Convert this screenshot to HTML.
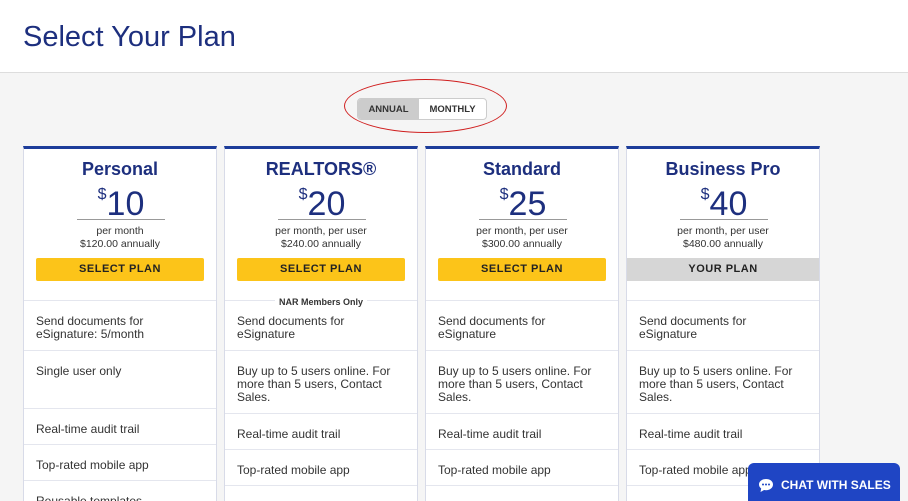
<!DOCTYPE html>
<html style="height:501px;overflow:hidden"><head><style>
*{box-sizing:border-box;margin:0;padding:0}
html,body{width:908px;height:501px;overflow:hidden}
body{background:#f5f5f5;font-family:"Liberation Sans",sans-serif;position:relative}
.hdr{position:absolute;left:0;top:0;width:908px;height:73px;background:#fff;border-bottom:1px solid #ddd}
.hdr h1{position:absolute;left:23px;top:21px;font-weight:normal;font-size:29px;color:#1d2f7e}
.tog{position:absolute;left:357px;top:98px;width:130px;height:22px;border:1px solid #ccc;border-radius:4px;background:#fff;font-size:9.5px;font-weight:bold;color:#333;display:flex;overflow:hidden}
.tog div{display:flex;align-items:center;justify-content:center}
.oval{position:absolute;left:344px;top:79px;width:163px;height:54px;border:1.5px solid #d02020;border-radius:50%}
.card{position:absolute;top:146px;width:194px;height:360px;background:#fff;border:1px solid #d8dbe8;border-top:3px solid #1d3d9a}
.t{position:absolute;top:10px;width:100%;text-align:center;font-size:18px;font-weight:bold;color:#1d2f7e}
.p{position:absolute;top:36px;left:53px;width:88px;height:35px;border-bottom:1px solid #999;text-align:center;color:#1d2f7e;font-size:34px;line-height:38px}
.p sup{font-size:16px;vertical-align:top;line-height:20px}
.s{position:absolute;top:76px;width:100%;text-align:center;font-size:10.5px;color:#333;line-height:13px}
.b{position:absolute;top:109px;left:12px;width:168px;height:23px;background:#fcc419;border-radius:2px;text-align:center;font-size:11px;font-weight:bold;letter-spacing:.5px;line-height:23px;color:#222}
.b.g{left:0;width:192px;background:#d6d6d6;border-radius:0}
.r{position:absolute;left:0;width:100%;border-top:1px solid #e4e6ee;padding:14px 12px 0;font-size:12px;color:#333;line-height:13px}
.nar{position:absolute;top:148px;width:100%;text-align:center;font-size:9px;font-weight:bold;color:#333}
.nar span{background:#fff;padding:0 4px}
.chat{position:absolute;left:748px;top:463px;width:152px;height:38px;background:#1f45c4;border-radius:6px 6px 0 0;color:#fff;font-weight:bold;font-size:12px;display:flex;align-items:center;padding-left:10px;padding-top:6px;gap:7px}
</style></head><body>
<div class="hdr"><h1>Select Your Plan</h1></div>
<div class="oval"></div>
<div class="tog"><div style="width:61px;background:#ccc">ANNUAL</div><div style="flex:1">MONTHLY</div></div>

<div class="card" style="left:23px">
<div class="t">Personal</div><div class="p"><sup>$</sup>10</div>
<div class="s">per month<br>$120.00 annually</div><div class="b">SELECT PLAN</div>
<div class="r" style="top:151px;height:50px">Send documents for<br>eSignature: 5/month</div>
<div class="r" style="top:201px;height:58px">Single user only</div>
<div class="r" style="top:259px;height:36px">Real-time audit trail</div>
<div class="r" style="top:295px;height:36px">Top-rated mobile app</div>
<div class="r" style="top:331px;height:36px">Reusable templates</div>
</div>

<div class="card" style="left:224px">
<div class="t">REALTORS®</div><div class="p"><sup>$</sup>20</div>
<div class="s">per month, per user<br>$240.00 annually</div><div class="b">SELECT PLAN</div>
<div class="r" style="top:151px;height:50px">Send documents for<br>eSignature</div>
<div class="nar"><span>NAR Members Only</span></div>
<div class="r" style="top:201px;height:63px">Buy up to 5 users online. For more than 5 users, Contact Sales.</div>
<div class="r" style="top:264px;height:36px">Real-time audit trail</div>
<div class="r" style="top:300px;height:36px">Top-rated mobile app</div>
<div class="r" style="top:336px;height:36px">Reusable templates</div>
</div>

<div class="card" style="left:425px">
<div class="t">Standard</div><div class="p"><sup>$</sup>25</div>
<div class="s">per month, per user<br>$300.00 annually</div><div class="b">SELECT PLAN</div>
<div class="r" style="top:151px;height:50px">Send documents for<br>eSignature</div>
<div class="r" style="top:201px;height:63px">Buy up to 5 users online. For more than 5 users, Contact Sales.</div>
<div class="r" style="top:264px;height:36px">Real-time audit trail</div>
<div class="r" style="top:300px;height:36px">Top-rated mobile app</div>
<div class="r" style="top:336px;height:36px">Reusable templates</div>
</div>

<div class="card" style="left:626px">
<div class="t">Business Pro</div><div class="p"><sup>$</sup>40</div>
<div class="s">per month, per user<br>$480.00 annually</div><div class="b g">YOUR PLAN</div>
<div class="r" style="top:151px;height:50px">Send documents for<br>eSignature</div>
<div class="r" style="top:201px;height:63px">Buy up to 5 users online. For more than 5 users, Contact Sales.</div>
<div class="r" style="top:264px;height:36px">Real-time audit trail</div>
<div class="r" style="top:300px;height:36px">Top-rated mobile app</div>
<div class="r" style="top:336px;height:36px">Reusable templates</div>
</div>

<div class="chat"><svg width="16" height="15" viewBox="0 0 16 15"><path d="M8 1C4 1 1 3.5 1 6.5c0 1.6.8 3 2.2 4L2.5 14l3.6-2c.6.1 1.2.2 1.9.2 4 0 7-2.5 7-5.7S12 1 8 1z" fill="#fff"/><circle cx="5" cy="6.5" r="1" fill="#1f45c4"/><circle cx="8" cy="6.5" r="1" fill="#1f45c4"/><circle cx="11" cy="6.5" r="1" fill="#1f45c4"/></svg>CHAT WITH SALES</div>
</body></html>
